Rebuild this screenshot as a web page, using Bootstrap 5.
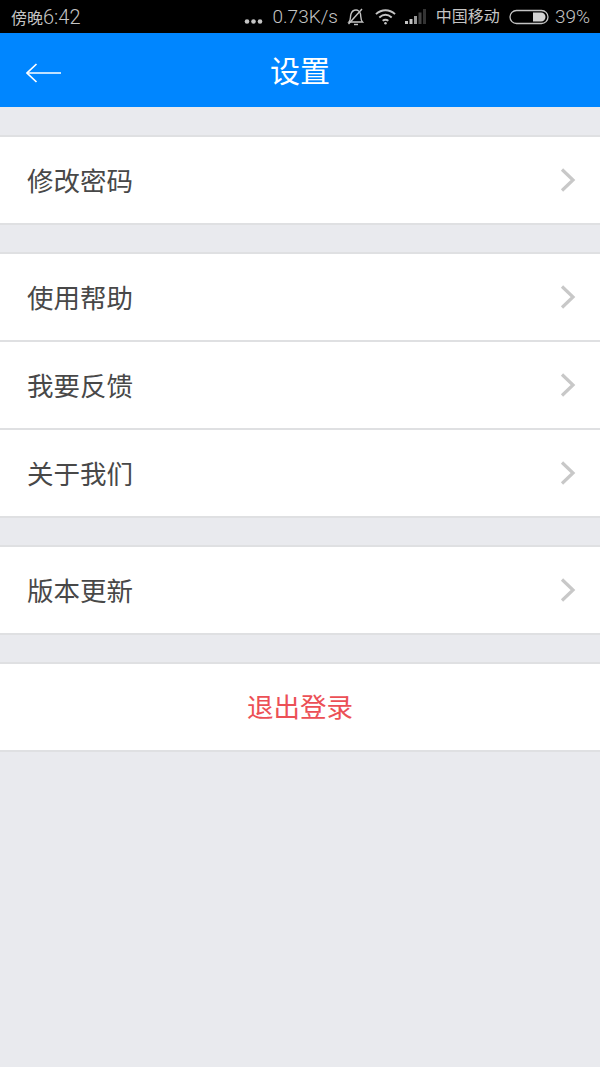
<!DOCTYPE html>
<html lang="zh">
<head>
<meta charset="utf-8">
<link href="https://cdn.jsdelivr.net/npm/bootstrap@5.3.0/dist/css/bootstrap.min.css" rel="stylesheet">
<style>
html,body{height:100%}
body{background:#e9eaee;font-family:"Liberation Sans","Noto Sans CJK SC",sans-serif;overflow:hidden}
.stat-bar{height:33px;background:#000;color:#c4c4c4;font-size:16px;padding:0 10px 0 11px;line-height:1}
.num-text{font-family:Roboto,"Noto Sans CJK SC",sans-serif;font-weight:300;font-size:19px}
.clock-num{font-size:20px}
.stat-side{gap:9.500px}
.stat-pct{margin-left:-4px}
.app-head{height:74px;background:#0086ff;color:#fff}
.app-title{font-size:30px;line-height:1;margin-top:3px}
.back-ico{position:absolute;left:26px;top:30px}
.menu-group{margin-top:27px;background:#fff;border-top:2px solid #dfe0e2;border-bottom:2px solid #dfe0e2}
.first-group{margin-top:28px}
.menu-row{height:86px;padding:0 24px 0 27px;font-size:26.500px;color:#484848;line-height:1}
.menu-row>span{margin-top:4px}
.menu-row+.menu-row{border-top:2px solid #dfe0e2;height:88px}
.logout{color:#ec5056;height:86px;font-size:26.500px;line-height:1}
.logout>span{margin-top:2px}
</style>
</head>
<body>
<div class="stat-bar d-flex align-items-center">
  <span>傍晚<span class="num-text clock-num">6:42</span></span>
  <div class="ms-auto d-flex align-items-center stat-side">
    <svg width="19" height="20" viewBox="0 0 19 20" fill="#c4c4c4"><circle cx="3" cy="14.500" r="2.300"/><circle cx="9.500" cy="14.500" r="2.300"/><circle cx="16" cy="14.500" r="2.300"/></svg>
    <span class="num-text">0.73K/s</span>
    <svg width="18" height="20" viewBox="0 0 18 20" fill="none" stroke="#c4c4c4" stroke-width="1.400"><path d="M2 15c2-2 1-5 2-8s3-4 5-4 4 2 4.500 4c.5 3 0 6 2 8z"/><path d="M7 17.500h4"/><path d="M1.500 17 15 2"/></svg>
    <svg width="21" height="18" viewBox="0 0 22 18" fill="none" stroke="#c4c4c4" stroke-width="2"><path d="M1 6c6-5.500 14-5.500 20 0"/><path d="M4.500 9.500c4-3.500 9-3.500 13 0"/><path d="M8 13c2-1.500 4-1.500 6 0"/><circle cx="11" cy="15.500" r="1.300" fill="#c4c4c4" stroke="none"/></svg>
    <svg width="21" height="15" viewBox="0 0 21 15" fill="#c4c4c4"><rect x="0" y="12" width="3" height="3"/><rect x="4.500" y="10" width="3" height="5"/><rect x="9" y="7" width="3" height="8" fill="#999"/><rect x="13.500" y="3.500" width="3" height="11.500" fill="#444"/><rect x="18" y="0" width="3" height="15" fill="#333"/></svg>
    <span>中国移动</span>
    <svg width="40" height="16" viewBox="0 0 40 16"><rect x="1" y="1.500" width="38" height="13" rx="6.500" fill="none" stroke="#c4c4c4" stroke-width="1.300"/><path d="M24 3.500h8a4.500 4.500 0 0 1 0 9h-8z" fill="#d4d4d4"/></svg>
    <span class="num-text stat-pct">39%</span>
  </div>
</div>
<header class="app-head position-relative d-flex align-items-center justify-content-center">
  <svg class="back-ico" width="36" height="20" viewBox="0 0 36 20" fill="none" stroke="#fff" stroke-width="1.700"><path d="M1 10h34"/><path d="M10.500 1 1 10l9.500 9"/></svg>
  <span class="app-title">设置</span>
</header>
<main>
  <div class="menu-group first-group">
    <div class="menu-row d-flex align-items-center justify-content-between"><span>修改密码</span><svg width="16" height="24" viewBox="0 0 16 24" fill="none" stroke="#c8c8c8" stroke-width="3.200"><path d="M2 1.500 13 12 2 22.500"/></svg></div>
  </div>
  <div class="menu-group">
    <div class="menu-row d-flex align-items-center justify-content-between"><span>使用帮助</span><svg width="16" height="24" viewBox="0 0 16 24" fill="none" stroke="#c8c8c8" stroke-width="3.200"><path d="M2 1.500 13 12 2 22.500"/></svg></div>
    <div class="menu-row d-flex align-items-center justify-content-between"><span>我要反馈</span><svg width="16" height="24" viewBox="0 0 16 24" fill="none" stroke="#c8c8c8" stroke-width="3.200"><path d="M2 1.500 13 12 2 22.500"/></svg></div>
    <div class="menu-row d-flex align-items-center justify-content-between"><span>关于我们</span><svg width="16" height="24" viewBox="0 0 16 24" fill="none" stroke="#c8c8c8" stroke-width="3.200"><path d="M2 1.500 13 12 2 22.500"/></svg></div>
  </div>
  <div class="menu-group">
    <div class="menu-row d-flex align-items-center justify-content-between"><span>版本更新</span><svg width="16" height="24" viewBox="0 0 16 24" fill="none" stroke="#c8c8c8" stroke-width="3.200"><path d="M2 1.500 13 12 2 22.500"/></svg></div>
  </div>
  <div class="menu-group">
    <div class="logout d-flex align-items-center justify-content-center"><span>退出登录</span></div>
  </div>
</main>
<script src="https://cdn.jsdelivr.net/npm/bootstrap@5.3.0/dist/js/bootstrap.bundle.min.js"></script>
</body>
</html>
